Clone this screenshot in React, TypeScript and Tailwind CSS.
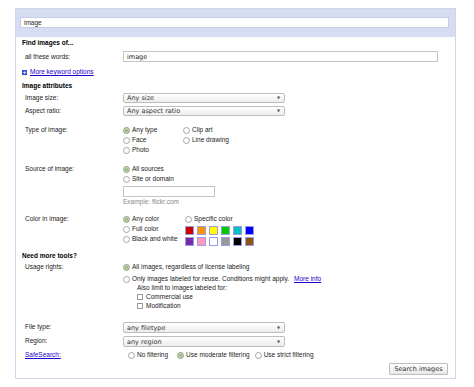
import clsx from "clsx";

const sans = "font-['Liberation_Sans',Arial,sans-serif]";
const deja = "font-['DejaVu_Sans',sans-serif]";

function Radio({ checked = false }: { checked?: boolean }) {
  return (
    <span
      className={clsx(
        "w-[7px] h-[7px] rounded-full border shrink-0 flex items-center justify-center",
        checked ? "border-[#8aa27a] bg-[#c9d8b9]" : "border-[#a5a5a5] bg-white"
      )}
    >
      {checked && <span className="w-[3px] h-[3px] rounded-full bg-[#9ab486]" />}
    </span>
  );
}

function Option({ label, checked, className }: { label: string; checked?: boolean; className?: string }) {
  return (
    <div className={clsx("flex items-center gap-[2px] h-[10px]", className)}>
      <Radio checked={checked} />
      <span>{label}</span>
    </div>
  );
}

function Check({ label }: { label: string }) {
  return (
    <div className="flex items-center gap-[3px] h-[9px]">
      <span className="w-[6px] h-[6px] border border-[#999] bg-white shrink-0" />
      <span>{label}</span>
    </div>
  );
}

function Select({ value, className }: { value: string; className?: string }) {
  return (
    <div
      className={clsx(
        "w-[162px] h-[10px] border border-[#bdbdbd] rounded-[2px] bg-gradient-to-b from-white to-[#ececec] flex items-center justify-between pl-[3px] pr-[4px]",
        deja,
        className
      )}
    >
      <span className="text-[#333]">{value}</span>
      <span className="text-[4px] text-[#555]">▼</span>
    </div>
  );
}

function Row({ label, children, className }: { label: React.ReactNode; children: React.ReactNode; className?: string }) {
  return (
    <div className={clsx("flex", className)}>
      <div className="w-[101px] pl-[3px] shrink-0 h-[10px] flex items-center">{label}</div>
      <div>{children}</div>
    </div>
  );
}

const swatches = [
  ["#cc0000", "#fb940b", "#ffff00", "#00cc00", "#03c0c6", "#0000ff"],
  ["#762ca7", "#ff98bf", "#ffffff", "#999999", "#000000", "#885418"],
];

export default function App() {
  return (
    <div className={clsx("min-h-screen bg-white pt-[8px] pl-[15px] text-[6.5px] leading-[10px] text-[#222]", sans)}>
      <div className="w-[441px] h-[371px] border border-[#cdd6ea] bg-white">
        <div className="bg-[#d6ddf3] h-[28px] pt-[8px] pl-[4px]">
          <div className="w-[429px] h-[11px] bg-white border border-[#c5cde0] pl-[3px] flex items-center">
            <span>image</span>
          </div>
        </div>

        <div className="pl-[6px] pt-[1px]">
          <div className="font-bold text-black">Find images of...</div>
          <Row label="all these words:" className="mt-[3px] items-center">
            <div className={clsx("w-[315px] h-[11px] border border-[#c4c4c4] pl-[3px] flex items-center", deja)}>
              image
            </div>
          </Row>

          <div className="mt-[5px] flex items-center gap-[3px] h-[10px]">
            <span className="w-[5px] h-[5px] bg-[#2f55c9] text-white text-[6px] leading-[5px] flex items-center justify-center font-bold">
              +
            </span>
            <span className="text-[#2200cc] underline">More keyword options</span>
          </div>

          <div className="mt-[4px] font-bold text-black">Image attributes</div>
          <Row label="Image size:" className="mt-[2px]">
            <Select value="Any size" />
          </Row>
          <Row label="Aspect ratio:" className="mt-[3px]">
            <Select value="Any aspect ratio" />
          </Row>

          <Row label="Type of image:" className="mt-[9px]">
            <div className="flex">
              <div className="w-[60px]">
                <Option label="Any type" checked />
                <Option label="Face" />
                <Option label="Photo" />
              </div>
              <div>
                <Option label="Clip art" />
                <Option label="Line drawing" />
              </div>
            </div>
          </Row>

          <Row label="Source of image:" className="mt-[9px]">
            <Option label="All sources" checked />
            <Option label="Site or domain" />
            <div className="mt-[2px] w-[92px] h-[11px] border border-[#c4c4c4]" />
            <div className="text-[#888]">Example: flickr.com</div>
          </Row>

          <Row label="Color in image:" className="mt-[7px]">
            <div className="flex">
              <div className="w-[62px]">
                <Option label="Any color" checked />
                <Option label="Full color" />
                <Option label="Black and white" />
              </div>
              <div>
                <Option label="Specific color" />
                <div className="mt-[2px] flex flex-col gap-[2px]">
                  {swatches.map((row, i) => (
                    <div key={i} className="flex gap-[3px]">
                      {row.map((c) => (
                        <span key={c} className="w-[9px] h-[9px] border border-[#9d9de0]" style={{ backgroundColor: c }} />
                      ))}
                    </div>
                  ))}
                </div>
              </div>
            </div>
          </Row>

          <div className="mt-[5px] font-bold text-black">Need more tools?</div>
          <Row label="Usage rights:" className="mt-[1px]">
            <Option label="All images, regardless of license labeling" checked />
            <div className="mt-[2px] flex items-center gap-[2px] h-[10px]">
              <Radio />
              <span>Only images labeled for reuse. Conditions might apply.</span>
              <span className="ml-[3px] text-[#2200cc] underline">More info</span>
            </div>
            <div className="pl-[14px] leading-[8px]">
              <div className="h-[8px]">Also limit to images labeled for:</div>
              <Check label="Commercial use" />
              <Check label="Modification" />
            </div>
          </Row>

          <Row label="File type:" className="mt-[12px]">
            <Select value="any filetype" className="h-[11px]" />
          </Row>
          <Row label="Region:" className="mt-[3px]">
            <Select value="any region" className="h-[11px]" />
          </Row>
          <Row label={<span className="text-[#2200cc] underline">SafeSearch:</span>} className="mt-[3px]">
            <div className="flex items-center h-[10px] pl-[5px]">
              <Option label="No filtering" />
              <Option label="Use moderate filtering" checked className="ml-[9px]" />
              <Option label="Use strict filtering" className="ml-[5px]" />
            </div>
          </Row>

          <div className="flex justify-end pr-[7px] mt-[3px]">
            <button
              className={clsx(
                "w-[59px] h-[12px] border border-[#bdbdbd] rounded-[1px] bg-gradient-to-b from-white to-[#e8e8e8] text-[6.5px] leading-[10px] text-[#333]",
                deja
              )}
            >
              Search images
            </button>
          </div>
        </div>
      </div>
    </div>
  );
}
